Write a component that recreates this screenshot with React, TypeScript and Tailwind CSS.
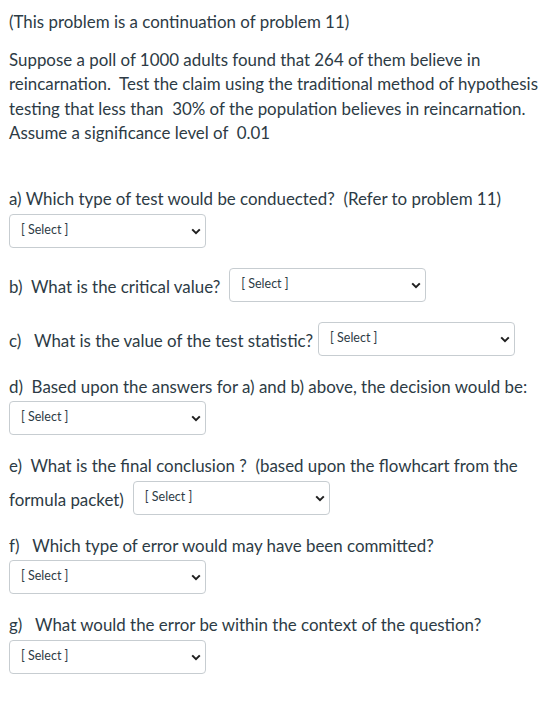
import React from 'react';

// Native-looking dropdown used for every blank in the quiz question
function SelectBox({ className = '' }: { className?: string }) {
  return (
    <div
      className={`flex h-[34px] w-[197px] shrink-0 items-center justify-between rounded-[4px] border border-[#c7cdd1] bg-white pl-[11px] pr-[4px] text-[12.5px] leading-none text-[#2d3b45] ${className}`}
    >
      <span className="pb-[2px]">[ Select ]</span>
      <svg width="10" height="7" viewBox="0 0 10 7" className="mt-[1px]">
        <path d="M1.2 1.4 L5 5.2 L8.8 1.4" fill="none" stroke="#1f1f1f" strokeWidth="2" />
      </svg>
    </div>
  );
}

export default function App() {
  return (
    <div className="min-h-screen bg-white pl-[9px] pt-[10px] font-['Lato',_'Open_Sans',_sans-serif] text-[16.9px] leading-[24.4px] text-[#2d3b45]">
      <p>(This problem is a continuation of problem 11)</p>

      <p className="mt-[13.6px]">
        Suppose a poll of 1000 adults found that 264 of them believe in
        <br />
        reincarnation.&nbsp; Test the claim using the traditional method of hypothesis
        <br />
        testing that less than&nbsp; 30% of the population believes in reincarnation.
        <br />
        Assume a significance level of&nbsp; 0.01
      </p>

      {/* a */}
      <p className="mt-[41.4px]">a) Which type of test would be conduected?&nbsp; (Refer to problem 11)</p>
      <SelectBox className="mt-[2.6px]" />

      {/* b */}
      <div className="mt-[20px] flex items-center">
        <span className="pt-[5px]">b)&nbsp; What is the critical value?</span>
        <SelectBox className="ml-[9px]" />
      </div>

      {/* c */}
      <div className="mt-[20px] flex items-center">
        <span className="pt-[5px]">c)&nbsp;&nbsp; What is the value of the test statistic?</span>
        <SelectBox className="ml-[5px]" />
      </div>

      {/* d */}
      <p className="mt-[19px]">d)&nbsp; Based upon the answers for a) and b) above, the decision would be:</p>
      <SelectBox className="mt-[1.6px]" />

      {/* e */}
      <p className="mt-[19px]">e)&nbsp; What is the final conclusion ?&nbsp; (based upon the flowhcart from the</p>
      <div className="mt-[2.6px] flex items-center">
        <span className="pt-[5px]">formula packet)</span>
        <SelectBox className="ml-[9px]" />
      </div>

      {/* f */}
      <p className="mt-[19px]">f)&nbsp;&nbsp; Which type of error would may have been committed?</p>
      <SelectBox className="mt-[1.6px]" />

      {/* g */}
      <p className="mt-[19px]">g)&nbsp;&nbsp; What would the error be within the context of the question?</p>
      <SelectBox className="mt-[2.6px]" />
    </div>
  );
}
